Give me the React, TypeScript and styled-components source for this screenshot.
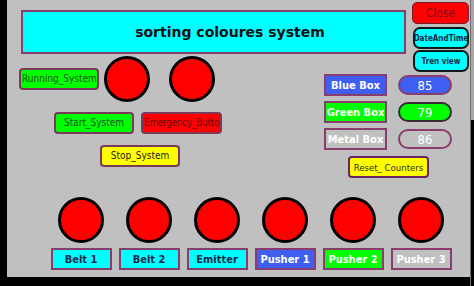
import React from "react";
import styled, { createGlobalStyle } from "styled-components";

// Palette -----------------------------------------------------------------------

const PANEL = "#c0c0c0";
const PLUM = "#8a3c6c";
const CYAN = "#00ffff";
const LIME = "#00ff00";
const RED = "#ff0000";
const YELLOW = "#ffff00";
const ROYAL = "#3f5ff2";
const NARROW = `"DejaVu Sans Condensed", "Noto Sans", sans-serif`;

// Data --------------------------------------------------------------------------

const counters = [
  { label: "Blue Box", value: 85, bg: ROYAL, ring: PLUM },
  { label: "Green Box", value: 79, bg: LIME, ring: "#3a2a38" },
  { label: "Metal Box", value: 86, bg: PANEL, ring: PLUM },
];

const stations = [
  { name: "Belt 1", bg: CYAN, fg: "#1b2a48" },
  { name: "Belt 2", bg: CYAN, fg: "#1b2a48" },
  { name: "Emitter", bg: CYAN, fg: "#1b2a48" },
  { name: "Pusher 1", bg: ROYAL, fg: "#ffffff" },
  { name: "Pusher 2", bg: LIME, fg: "#ffffff" },
  { name: "Pusher 3", bg: PANEL, fg: "#ffffff" },
];

// Component ---------------------------------------------------------------------

const App: React.FC = () => {
  return (
    <Screen>
      <GlobalStyle />
      <Panel>
        <Title>sorting coloures system</Title>

        <Side>
          <CloseButton>Close</CloseButton>
          <NavButton>DateAndTime</NavButton>
          <NavButton $gap={1}>Tren view</NavButton>
        </Side>

        <Controls>
          <StatusRow>
            <Btn $bg={LIME} $fg="#1f4f1f" $w={80}>
              Running_System
            </Btn>
            <Lamp />
            <Lamp $gap={14} />
          </StatusRow>
          <ButtonRow $indent={35} $top={10}>
            <Btn $bg={LIME} $fg="#1f4f1f" $w={80}>
              Start_System
            </Btn>
            <Btn $bg={RED} $fg="#6a0d10" $w={81} $clip>
              Emergency_Button
            </Btn>
          </ButtonRow>
          <ButtonRow $indent={81} $top={11}>
            <Btn $bg={YELLOW} $fg="#1a1a1a" $w={80}>
              Stop_System
            </Btn>
          </ButtonRow>
        </Controls>

        <Counters>
          {counters.map((c) => (
            <CounterRow key={c.label}>
              <Tag $bg={c.bg} $fg="#ffffff" $w={63}>
                {c.label}
              </Tag>
              <Pill $bg={c.bg} $ring={c.ring}>
                {c.value}
              </Pill>
            </CounterRow>
          ))}
          <ResetButton>Reset_ Counters</ResetButton>
        </Counters>

        <Stations>
          {stations.map((s) => (
            <Station key={s.name}>
              <Lamp />
              <Tag $bg={s.bg} $fg={s.fg} $w={61}>
                {s.name}
              </Tag>
            </Station>
          ))}
        </Stations>
      </Panel>
      <Edge />
    </Screen>
  );
};

export default App;

// Styled ------------------------------------------------------------------------

const GlobalStyle = createGlobalStyle`
  html, body {
    margin: 0;
    padding: 0;
    background: #000;
  }
  body {
    font-family: "DejaVu Sans", Verdana, sans-serif;
  }
  * {
    box-sizing: border-box;
  }
`;

const Screen = styled.div`
  width: 474px;
  height: 286px;
  display: flex;
  align-items: flex-start;
  padding-left: 7px;
  background: #000;
  overflow: hidden;
`;

const Panel = styled.div`
  width: 463px;
  height: 277px;
  background: ${PANEL};
  display: grid;
  grid-template-columns: 12px 2px 303px 82px 5px 58px 1fr;
  grid-template-rows: 54px 126px 1fr;
`;

const Edge = styled.div`
  width: 4px;
  height: 286px;
  border-left: 1px solid #6d6d6d;
  background: linear-gradient(#a9a9a9 0 120px, #000 120px);
`;

const Title = styled.div`
  grid-column: 3 / 5;
  grid-row: 1;
  margin-top: 10px;
  height: 44px;
  border: 2px solid ${PLUM};
  background: ${CYAN};
  display: flex;
  align-items: center;
  justify-content: center;
  padding-left: 33px;
  font-size: 14px;
  font-weight: bold;
  color: #111;
`;

const Side = styled.div`
  grid-column: 6 / 7;
  grid-row: 1 / 3;
  align-self: start;
  padding-top: 2px;
  display: flex;
  flex-direction: column;
  align-items: flex-end;
`;

const CloseButton = styled.div`
  width: 57px;
  height: 22px;
  border: 1px solid #7a1a2a;
  border-radius: 5px;
  background: ${RED};
  color: #7a0f1a;
  font-family: ${NARROW};
  font-size: 12px;
  display: flex;
  align-items: center;
  justify-content: center;
`;

const NavButton = styled.div<{ $gap?: number }>`
  width: 56px;
  height: 22px;
  margin-top: ${({ $gap }) => $gap ?? 3}px;
  border: 2px solid #0e1a1a;
  border-radius: 7px;
  background: ${CYAN};
  color: #17284a;
  font-family: ${NARROW};
  font-size: 8px;
  font-weight: bold;
  display: flex;
  align-items: center;
  justify-content: center;
  white-space: nowrap;
`;

const Controls = styled.div`
  grid-column: 2 / 4;
  grid-row: 2;
  padding-top: 2px;
  display: flex;
  flex-direction: column;
`;

const StatusRow = styled.div`
  display: flex;
  align-items: center;
  gap: 5px;
`;

const ButtonRow = styled.div<{ $indent: number; $top: number }>`
  display: flex;
  gap: 7px;
  margin-top: ${({ $top }) => $top}px;
  padding-left: ${({ $indent }) => $indent}px;
`;

const Btn = styled.div<{ $bg: string; $fg: string; $w: number; $clip?: boolean }>`
  width: ${({ $w }) => $w}px;
  height: 22px;
  border: 2px solid #7c3a5a;
  border-radius: 4px;
  background: ${({ $bg }) => $bg};
  color: ${({ $fg }) => $fg};
  font-family: ${NARROW};
  font-size: 10px;
  line-height: 18px;
  letter-spacing: ${({ $clip }) => ($clip ? "-0.3px" : "0")};
  white-space: nowrap;
  overflow: hidden;
  text-align: ${({ $clip }) => ($clip ? "left" : "center")};
  padding: 0 1px;
`;

const Lamp = styled.div<{ $gap?: number }>`
  width: 46px;
  height: 46px;
  margin-left: ${({ $gap }) => $gap ?? 0}px;
  flex-shrink: 0;
  border-radius: 50%;
  border: 3px solid #000;
  background: ${RED};
`;

const Counters = styled.div`
  grid-column: 4 / 7;
  grid-row: 2;
  padding-top: 20px;
  display: flex;
  flex-direction: column;
  gap: 5px;
`;

const CounterRow = styled.div`
  display: flex;
  align-items: center;
  gap: 11px;
`;

const Tag = styled.div<{ $bg: string; $fg: string; $w: number }>`
  width: ${({ $w }) => $w}px;
  height: 22px;
  border: 2px solid ${PLUM};
  background: ${({ $bg }) => $bg};
  color: ${({ $fg }) => $fg};
  font-family: ${NARROW};
  font-size: 11px;
  font-weight: bold;
  display: flex;
  align-items: center;
  justify-content: center;
  white-space: nowrap;
  overflow: hidden;
`;

const Pill = styled.div<{ $bg: string; $ring: string }>`
  width: 54px;
  height: 20px;
  border: 2px solid ${({ $ring }) => $ring};
  border-radius: 10px;
  background: ${({ $bg }) => $bg};
  color: #ffffff;
  font-family: ${NARROW};
  font-size: 13px;
  display: flex;
  align-items: center;
  justify-content: center;
`;

const ResetButton = styled.div`
  width: 81px;
  height: 22px;
  margin: 1px 0 0 24px;
  border: 2px solid #6a2468;
  border-radius: 4px;
  background: ${YELLOW};
  color: #2a2a2a;
  font-family: ${NARROW};
  font-size: 9.5px;
  display: flex;
  align-items: center;
  justify-content: center;
  white-space: nowrap;
`;

const Stations = styled.div`
  grid-column: 1 / -1;
  grid-row: 3;
  padding: 17px 0 0 40px;
  display: flex;
`;

const Station = styled.div`
  width: 68px;
  display: flex;
  flex-direction: column;
  align-items: center;
  gap: 5px;
`;
